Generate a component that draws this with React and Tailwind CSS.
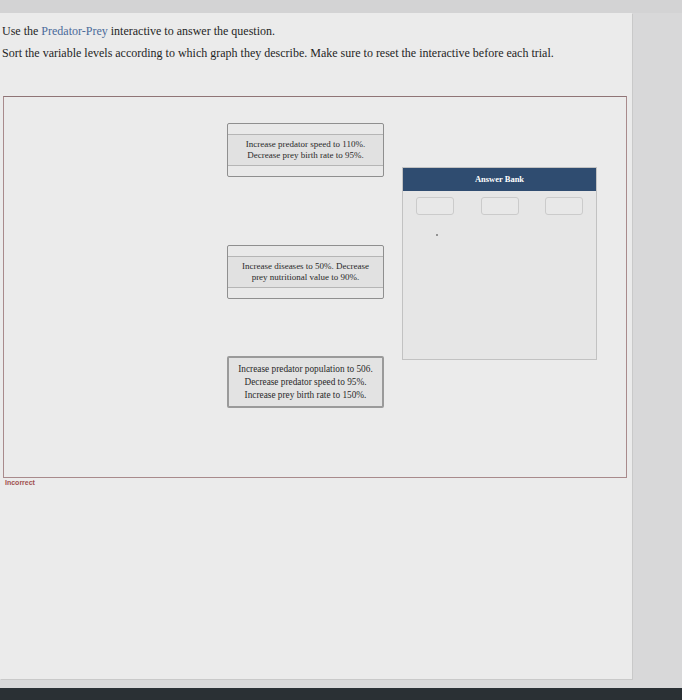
import React from "react";

const serif = { fontFamily: '"Liberation Serif", "Times New Roman", serif' };

const SplitCard = ({ lines, className }) => (
  <div className={`w-[157px] rounded-[2px] border border-[#8f8f8f] bg-[#e9e9e9] ${className}`}>
    <div className="h-[11px] border-b border-[#b5b5b5]" />
    <div className="bg-[#e1e1e1] py-[4px] text-center text-[9px] leading-[11px] text-[#2a2a2a]">
      {lines.map((l) => (
        <div key={l}>{l}</div>
      ))}
    </div>
    <div className="h-[11px] border-t border-[#b5b5b5]" />
  </div>
);

export default function App() {
  return (
    <div className="w-[682px] h-[700px] bg-[#d8d8d9] flex flex-col overflow-hidden" style={serif}>
      <div className="h-[13px] bg-[#d3d3d4]" />
      <div className="flex">
        <div className="w-[632px] h-[666px] bg-[#ebebeb] shadow-[1px_1px_0_#c9c9c9]">
          <div className="pt-[11px] pl-[2px] text-[12px] leading-[14px] text-[#1f1f1f]">
            <p>
              Use the <span className="text-[#4a6a9a]">Predator-Prey</span> interactive to answer the question.
            </p>
            <p className="mt-[8px]">
              Sort the variable levels according to which graph they describe. Make sure to reset the interactive before each trial.
            </p>
          </div>

          <div className="ml-[3px] mt-[36px] w-[624px] h-[382px] border border-[#a88a8c] border-t-[#8f7476] flex">
            <div className="ml-[223px] flex flex-col">
              <SplitCard
                className="mt-[26px]"
                lines={["Increase predator speed to 110%.", "Decrease prey birth rate to 95%."]}
              />
              <SplitCard
                className="mt-[68px]"
                lines={["Increase diseases to 50%. Decrease", "prey nutritional value to 90%."]}
              />
              <div className="mt-[57px] w-[157px] rounded-[2px] border-2 border-[#9a9a9a] bg-[#e3e3e3] pt-[5px] pb-[4px] text-center text-[9.3px] leading-[13px] text-[#2a2a2a]">
                <div>Increase predator population to 506.</div>
                <div>Decrease predator speed to 95%.</div>
                <div>Increase prey birth rate to 150%.</div>
              </div>
            </div>

            <div className="ml-[18px] mt-[70px] w-[195px] h-[193px] border border-[#c2c2c2] bg-[#e6e6e6] flex flex-col">
              <div className="h-[23px] bg-[#2f4c70] flex items-center justify-center text-[8.5px] font-bold text-white">
                Answer Bank
              </div>
              <div className="flex justify-between px-[13px] pt-[6px]">
                <div className="w-[38px] h-[18px] rounded-[3px] border border-[#cbcbcb] bg-[#e8e8e8]" />
                <div className="w-[38px] h-[18px] rounded-[3px] border border-[#cbcbcb] bg-[#e8e8e8]" />
                <div className="w-[38px] h-[18px] rounded-[3px] border border-[#cbcbcb] bg-[#e8e8e8]" />
              </div>
              <div className="ml-[33px] mt-[19px] w-[2px] h-[2px] rounded-full bg-[#777]" />
            </div>
          </div>

          <div
            className="pl-[5px] text-[7px] leading-[9px] font-bold text-[#a0504f]"
            style={{ fontFamily: '"Liberation Sans", Arial, sans-serif' }}
          >
            Incorrect
          </div>
        </div>
        <div className="flex-1" />
      </div>
      <div className="h-[9px]" />
      <div className="flex-1 bg-[#2a3034]" />
    </div>
  );
}
